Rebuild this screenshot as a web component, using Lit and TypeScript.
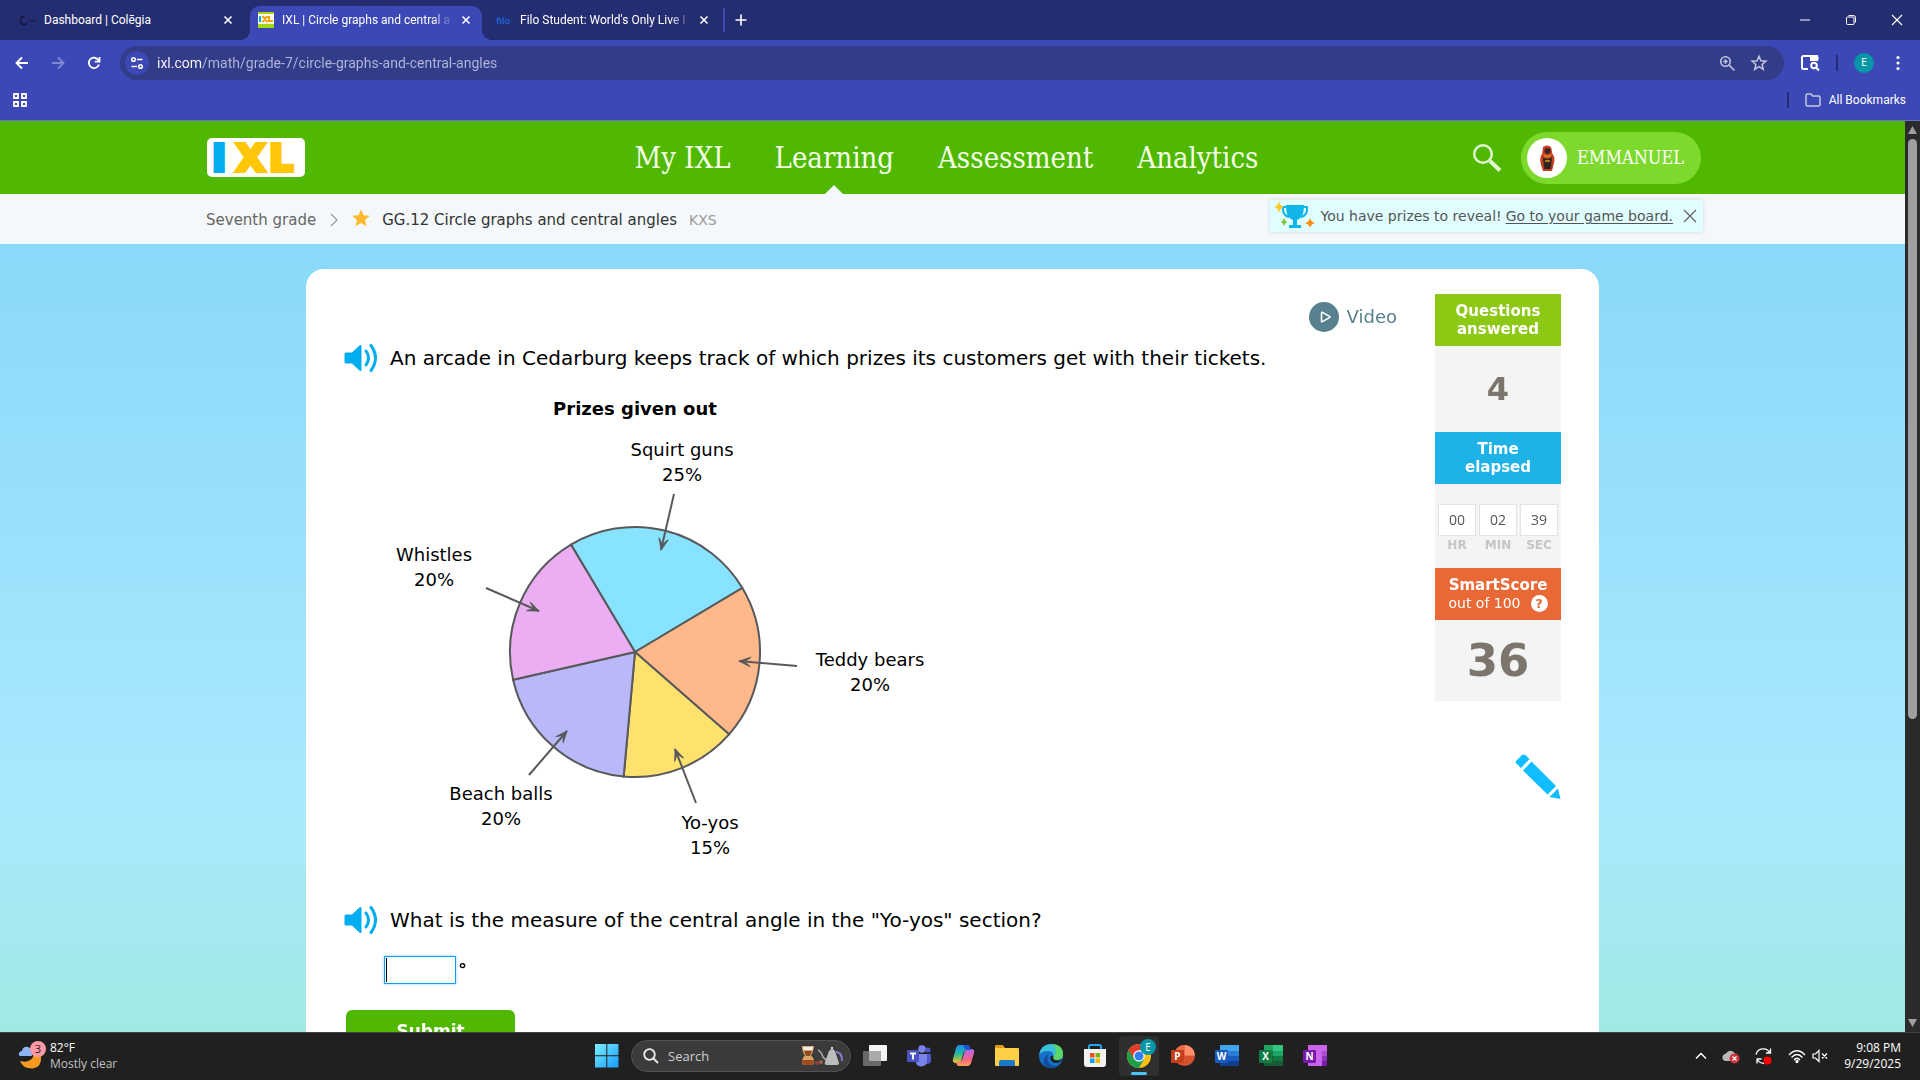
import { LitElement, html, svg, css, nothing } from "lit";
import { customElement } from "lit/decorators.js";
import { classMap } from "lit/directives/class-map.js";

/* ---------- shared icons ---------- */

const closeIcon = html`<svg width="10" height="10" viewBox="0 0 10 10" aria-hidden="true">
  <path d="M1.5 1.5l7 7M8.5 1.5l-7 7" stroke="#fff" stroke-width="1.6" fill="none" />
</svg>`;

const speakerIcon = html`<svg width="34" height="30" viewBox="0 0 34 30" aria-hidden="true">
  <path d="M2 9.500h6L15.500 2.500q2-1.400 2 1v23q0 2.400-2 1L8 20.500H2q-1.500 0-1.500-1.500v-8q0-1.500 1.500-1.500z" fill="#00aeef" />
  <path d="M22 8q5 7 0 14M27 2.500q9 12.500 0 25" fill="none" stroke="#00aeef" stroke-width="3" stroke-linecap="round" />
</svg>`;

const base = css`
  * {
    box-sizing: border-box;
  }
  button {
    border: 0;
    padding: 0;
    margin: 0;
    background: none;
    font: inherit;
    color: inherit;
    display: inline-flex;
    align-items: center;
    justify-content: center;
  }
  svg {
    display: block;
    flex: none;
  }
  a {
    color: inherit;
    text-decoration: none;
  }
  input {
    font: inherit;
    border: 0;
    outline: 0;
    padding: 0;
    background: none;
  }
`;

/* ---------- browser frame ---------- */

interface Tab {
  title: string;
  active: boolean;
  icon: unknown;
}

const tabs: Tab[] = [
  {
    title: "Dashboard | Colēgia",
    active: false,
    icon: html`<svg width="16" height="16" viewBox="0 0 16 16" aria-hidden="true">
      <path d="M5 4.500a4 4 0 1 0 2 6.500" fill="none" stroke="#121944" stroke-width="1.800" />
      <path d="M8 9h8" stroke="#1b2358" stroke-width="2" />
    </svg>`,
  },
  {
    title: "IXL | Circle graphs and central a",
    active: true,
    icon: html`<svg width="16" height="16" viewBox="0 0 16 16" aria-hidden="true">
      <rect width="16" height="16" fill="#fff" />
      <rect width="16" height="2" fill="#a4d80c" />
      <rect y="12" width="16" height="4" fill="#a4d80c" />
      <rect x="1" y="4" width="2" height="6" fill="#00aeef" />
      <path d="M4.500 4l5 6M9.500 4l-5 6M11 4v5h4" fill="none" stroke="#f7a500" stroke-width="2" />
    </svg>`,
  },
  {
    title: "Filo Student: World's Only Live I",
    active: false,
    icon: html`<span class="filo">filo</span>`,
  },
];

@customElement("browser-frame")
export class BrowserFrame extends LitElement {
  static styles = [
    base,
    css`
      :host {
        display: block;
        background: #3b48b5;
        color: #fff;
        font: 12px/16px Roboto, "Open Sans", sans-serif;
      }
      .strip {
        display: flex;
        align-items: stretch;
        height: 40px;
        padding-left: 12px;
        background: #252d72;
      }
      .tab {
        display: flex;
        align-items: center;
        gap: 8px;
        width: 238px;
        padding: 0 17px 0 8px;
        position: relative;
      }
      .tab.active {
        width: 232px;
        padding-right: 11px;
        margin-top: 6px;
        padding-bottom: 6px;
        border-radius: 10px 10px 0 0;
        background: #3b48b5;
      }
      .tab.active::before,
      .tab.active::after {
        content: "";
        position: absolute;
        bottom: 0;
        width: 10px;
        height: 10px;
      }
      .tab.active::before {
        left: -10px;
        background: radial-gradient(circle at 0 0, transparent 10px, #3b48b5 10px);
      }
      .tab.active::after {
        right: -10px;
        background: radial-gradient(circle at 100% 0, transparent 10px, #3b48b5 10px);
      }
      .tab.last {
        padding: 0 11px 0 14px;
      }
      .title {
        flex: 1;
        min-width: 0;
        overflow: hidden;
        white-space: nowrap;
      }
      .active .title,
      .last .title {
        mask-image: linear-gradient(to right, #000 88%, transparent);
      }
      .filo {
        width: 16px;
        color: #1c63d2;
        font: bold 10px/16px Lato, sans-serif;
      }
      .new {
        margin-left: 3px;
        padding-left: 10px;
        height: 24px;
        align-self: center;
        border-left: 2px solid #3b48b5;
      }
      .window {
        display: flex;
        gap: 30px;
        margin-left: auto;
        padding-right: 15px;
      }
      .window button {
        width: 16px;
      }
      .bar {
        display: flex;
        align-items: center;
        height: 46px;
        padding: 0 14px;
      }
      .nav {
        display: flex;
        gap: 20px;
        padding-right: 18px;
      }
      .url {
        display: flex;
        align-items: center;
        flex: 1;
        height: 34px;
        padding: 0 16px 0 5px;
        border-radius: 17px;
        background: #333c88;
      }
      .site {
        width: 24px;
        height: 24px;
        border-radius: 50%;
        background: #3b48b5;
      }
      .address {
        flex: 1;
        margin-left: 8px;
        font-size: 14px;
        line-height: 20px;
        color: transparent;
        -webkit-text-fill-color: transparent;
        background: linear-gradient(to right, #fff 45px, #b3b8dc 45px);
        -webkit-background-clip: text;
        background-clip: text;
      }
      .url > button + button {
        margin-left: 14px;
      }
      .side {
        display: flex;
        align-items: center;
        gap: 16px;
        padding-left: 16px;
      }
      .rule {
        width: 2px;
        height: 16px;
        background: #252d72;
      }
      .avatar {
        width: 20px;
        height: 20px;
        border-radius: 50%;
        background: #0796a6;
        font-size: 10px;
      }
      .marks {
        display: flex;
        align-items: center;
        justify-content: space-between;
        height: 35px;
        padding: 0 14px 6px 12px;
        border-bottom: 1px solid #6a70c4;
      }
      .all {
        display: flex;
        align-items: center;
        gap: 8px;
      }
      .all .rule {
        margin-right: 8px;
      }
    `,
  ];

  render() {
    return html`
      <div class="strip">
        ${tabs.map(
          (tab, i) => html`<div class=${classMap({ tab: true, active: tab.active, last: i === 2 })}>
            ${tab.icon}<span class="title">${tab.title}</span>
            <button aria-label="Close tab">${closeIcon}</button>
          </div>`,
        )}
        <button class="new" aria-label="New tab">
          <svg width="12" height="12" viewBox="0 0 12 12"><path d="M6 0.500v11M0.500 6h11" stroke="#fff" stroke-width="1.600" /></svg>
        </button>
        <div class="window">
          <button aria-label="Minimize">
            <svg width="12" height="12" viewBox="0 0 12 12"><path d="M1 6h10" stroke="#fff" /></svg>
          </button>
          <button aria-label="Restore">
            <svg width="12" height="12" viewBox="0 0 12 12" fill="none" stroke="#fff">
              <rect x="1.500" y="3" width="7.500" height="7.500" rx="1" /><path d="M3.500 1.500h5q2 0 2 2v5" />
            </svg>
          </button>
          <button aria-label="Close">
            <svg width="12" height="12" viewBox="0 0 12 12"><path d="M1 1l10 10M11 1L1 11" stroke="#fff" stroke-width="1.200" /></svg>
          </button>
        </div>
      </div>
      <div class="bar">
        <div class="nav">
          <button aria-label="Back">
            <svg width="16" height="16" viewBox="0 0 16 16" fill="none" stroke="#fff" stroke-width="1.800"><path d="M14 8H3M8 2.500L2.500 8 8 13.500" /></svg>
          </button>
          <button aria-label="Forward">
            <svg width="16" height="16" viewBox="0 0 16 16" fill="none" stroke="#8088d0" stroke-width="1.800"><path d="M2 8h11M8 2.500L13.500 8 8 13.500" /></svg>
          </button>
          <button aria-label="Reload">
            <svg width="16" height="16" viewBox="0 0 16 16" fill="none" stroke="#fff" stroke-width="1.800"><path d="M13 9.500A5.200 5.200 0 1 1 12.500 5.200L13.200 6.300M13.500 2v4.700H8.800" /></svg>
          </button>
        </div>
        <div class="url">
          <button class="site" aria-label="Site information">
            <svg width="14" height="14" viewBox="0 0 14 14" fill="none" stroke="#fff" stroke-width="1.500">
              <circle cx="3.500" cy="3.500" r="1.800" /><path d="M7 3.500h5.500M1.500 10.500H7" /><circle cx="10.500" cy="10.500" r="1.800" />
            </svg>
          </button>
          <input class="address" aria-label="Address" .value=${"ixl.com/math/grade-7/circle-graphs-and-central-angles"} />
          <button aria-label="Zoom">
            <svg width="17" height="17" viewBox="0 0 17 17" fill="none" stroke="#c3c6de" stroke-width="1.600">
              <circle cx="6.500" cy="6.500" r="4.700" /><path d="M10 10l5.500 5.500M4.300 6.500h4.400M6.500 4.300v4.400" />
            </svg>
          </button>
          <button aria-label="Bookmark this page">
            <svg width="18" height="18" viewBox="0 0 18 18" fill="none" stroke="#c3c6de" stroke-width="1.500">
              <path d="M9 2.200l1.900 4.600 5 .4-3.800 3.200 1.200 4.900L9 12.700l-4.300 2.600 1.200-4.900L2.100 7.200l5-.4z" />
            </svg>
          </button>
        </div>
        <div class="side">
          <button aria-label="Search with Lens">
            <svg width="20" height="18" viewBox="0 0 20 18" fill="none" stroke="#fff" stroke-width="2">
              <path d="M8 15H3.500Q2 15 2 13.500v-10Q2 2 3.500 2H16q1.500 0 1.500 1.500V6" /><path d="M11 2h6v4h-6z" fill="#fff" />
              <circle cx="14" cy="11.500" r="2.800" /><path d="M16 13.500l3 3" />
            </svg>
          </button>
          <span class="rule"></span>
          <button class="avatar" aria-label="Profile">E</button>
          <button aria-label="Menu">
            <svg width="16" height="16" viewBox="0 0 16 16" fill="#fff"><circle cx="8" cy="2.500" r="1.600" /><circle cx="8" cy="8" r="1.600" /><circle cx="8" cy="13.500" r="1.600" /></svg>
          </button>
        </div>
      </div>
      <div class="marks">
        <button aria-label="Apps">
          <svg width="16" height="16" viewBox="0 0 16 16" fill="none" stroke="#fff" stroke-width="1.800">
            <path d="M2 2h4v4H2zM10 2h4v4h-4zM2 10h4v4H2zM10 10h4v4h-4z" />
          </svg>
        </button>
        <div class="all">
          <span class="rule"></span>
          <svg width="16" height="14" viewBox="0 0 16 14" fill="none" stroke="#c3c6de" stroke-width="1.500">
            <path d="M1 2.500Q1 1 2.500 1H6l1.500 2h6q1.500 0 1.500 1.500v7q0 1.500-1.500 1.500h-11Q1 13 1 11.500z" />
          </svg>
          <button>All Bookmarks</button>
        </div>
      </div>
    `;
  }
}

/* ---------- site header ---------- */

@customElement("site-header")
export class SiteHeader extends LitElement {
  static styles = [
    base,
    css`
      :host {
        display: block;
        font: 15px/20px "DejaVu Sans", Verdana, sans-serif;
      }
      .green {
        display: flex;
        align-items: center;
        height: 73px;
        padding: 0 204px 0 207px;
        background: #50b800;
      }
      .logo {
        font: bold 38px/40px "DejaVu Sans", sans-serif;
      }
      .links {
        display: flex;
        flex: 1;
        align-self: stretch;
        justify-content: center;
        gap: 44px;
        font: 29px/74px "DejaVu Serif Condensed", "DejaVu Serif", serif;
        color: #f4ffe8;
        padding-left: 116px;
      }
      .link {
        position: relative;
        height: 73px;
      }
      .link.active::after {
        content: "";
        position: absolute;
        left: 50%;
        bottom: 0;
        margin-left: -9px;
        border: 9px solid transparent;
        border-top: 0;
        border-bottom-color: #f4f8fb;
      }
      .user {
        height: 52px;
        width: 180px;
        justify-content: flex-start;
        gap: 10px;
        margin-left: 19px;
        padding: 0 6px;
        border-radius: 26px;
        background: #7dda2d;
        color: #fff;
        font: 18px/20px "DejaVu Serif Condensed", "DejaVu Serif", serif;
      }
      .crumbs {
        display: flex;
        align-items: center;
        height: 50px;
        padding: 2px 202px 0 206px;
        background: #f4f8fb;
        color: #666;
      }
      .chevron {
        margin-left: 12px;
      }
      .star {
        margin: 0 0 4px 10px;
      }
      .skill {
        margin-left: 12px;
        color: #333;
      }
      .code {
        margin-left: 12px;
        color: #999;
        font-size: 14px;
      }
      .prizes {
        display: flex;
        align-items: center;
        height: 32px;
        margin: 0 0 8px auto;
        padding: 0 6px 0 4px;
        background: #e0fdff;
        box-shadow: 0 0 4px #cfd8dc;
        color: #555;
        font-size: 14px;
      }
      .prizes a {
        text-decoration: underline;
        text-underline-offset: 2px;
      }
      .prizes span {
        margin: 0 4px;
      }
      .prizes button {
        margin-left: 10px;
      }
    `,
  ];

  render() {
    return html`
      <header class="green">
        <a href="#" aria-label="Home">
          <svg class="logo" width="98" height="39" viewBox="0 0 98 39">
            <rect width="98" height="39" rx="5" fill="#fff" />
            <g stroke-width="4">
              <text x="5" y="33" fill="#00aeef" stroke="#00aeef">I</text>
              <text x="29" y="33" fill="#ffc708" stroke="#ffc708">X</text>
              <text x="62" y="33" fill="#ffc708" stroke="#ffc708">L</text>
            </g>
          </svg>
        </a>
        <nav class="links">
          ${["My IXL", "Learning", "Assessment", "Analytics"].map(
            (name) => html`<a href="#" class=${classMap({ link: true, active: name === "Learning" })}>${name}</a>`,
          )}
        </nav>
        <button aria-label="Search">
          <svg width="30" height="30" viewBox="0 0 30 30" fill="none" stroke="#e2f6cf">
            <circle cx="11" cy="11" r="8.800" stroke-width="2.500" /><path d="M18 18l10 9.500" stroke-width="4" />
          </svg>
        </button>
        <button class="user">
          <svg width="40" height="40" viewBox="0 0 40 40">
            <circle cx="20" cy="20" r="20" fill="#fff" />
            <path d="M16 9q4-3 8 0 1 3 1 6 4 5 1.500 12L25 33h-9l-2-6q-2-7 1.500-12 0-3 .5-6z" fill="#c73e22" />
            <circle cx="20.500" cy="13" r="3" fill="#3c2320" />
            <path d="M16 19q4 4 9 0l-1 12h-7z" fill="#30241f" />
            <path d="M17 17q3 3 7 0M18 23h5" stroke="#d69a1c" fill="none" stroke-width="1.300" />
          </svg>
          EMMANUEL
        </button>
      </header>
      <div class="crumbs">
        <a href="#">Seventh grade</a>
        <svg class="chevron" width="14" height="14" viewBox="0 0 14 14"><path d="M3 1l6 6-6 6" fill="none" stroke="#999" stroke-width="1.200" /></svg>
        <svg class="star" width="18" height="20" viewBox="0 0 18 20">
          <path d="M9 1.500l2.500 5.800 6.200.5-4.700 4.200 1.500 6.200L9 14.900l-5.500 3.300L5 12 .300 7.800l6.200-.5z" fill="#fdb92e" />
        </svg>
        <span class="skill">GG.12 Circle graphs and central angles</span>
        <span class="code">KXS</span>
        <div class="prizes">
          <svg width="42" height="30" viewBox="0 0 42 30">
            <path d="M12 4h18c0 9-2 13-7 15v5h4v3H15v-3h4v-5c-5-2-7-6-7-15z" fill="#12b5ea" />
            <path d="M12 6H9q-1 8 6 10M30 6h3q1 8-6 10" fill="none" stroke="#12b5ea" stroke-width="2" />
            <path d="M5 0q1 5 5 6-4 1-5 6Q4 7 0 6q4-1 5-6z" fill="#ffc92c" />
            <path d="M10 17q1 3 3 4-2 1-3 4-1-3-3-4 2-1 3-4z" fill="#7ac632" />
            <path d="M36 17q1 4 5 5-4 1-5 5-1-4-5-5 4-1 5-5z" fill="#fa8c16" />
          </svg>
          <span>You have prizes to reveal!</span>
          <a href="#">Go to your game board.</a>
          <button aria-label="Dismiss">
            <svg width="14" height="14" viewBox="0 0 14 14"><path d="M1 1l12 12M13 1L1 13" stroke="#666" stroke-width="1.400" /></svg>
          </button>
        </div>
      </div>
    `;
  }
}

/* ---------- circle graph ---------- */

interface Slice {
  name: string;
  percent: number;
  color: string;
  label: [number, number];
  from: [number, number];
  to: [number, number];
}

const slices: Slice[] = [
  { name: "Squirt guns", percent: 25, color: "#87e3ff", label: [338, 77], from: [330, 121], to: [317, 177] },
  { name: "Teddy bears", percent: 20, color: "#ffb88a", label: [526, 287], from: [453, 293], to: [395, 288] },
  { name: "Yo-yos", percent: 15, color: "#ffe26e", label: [366, 450], from: [352, 430], to: [331, 376] },
  { name: "Beach balls", percent: 20, color: "#b9b8f8", label: [157, 421], from: [185, 402], to: [223, 358] },
  { name: "Whistles", percent: 20, color: "#ecaef3", label: [90, 182], from: [142, 215], to: [195, 238] },
];

@customElement("circle-graph")
export class CircleGraph extends LitElement {
  static styles = [
    base,
    css`
      :host {
        display: block;
      }
      .text {
        font: 18px "DejaVu Sans", Verdana, sans-serif;
        text-anchor: middle;
      }
      .title {
        font-weight: bold;
      }
      .line {
        fill: none;
        stroke: #58595b;
        stroke-width: 2;
      }
      .head {
        fill: #58595b;
      }
    `,
  ];

  render() {
    const cx = 291;
    const cy = 279;
    const r = 125;
    let turn = -30.8;
    const at = (deg: number) => {
      const a = (deg * Math.PI) / 180;
      return `${cx + r * Math.sin(a)} ${cy - r * Math.cos(a)}`;
    };
    const wedges = slices.map((s) => {
      const start = turn;
      turn += s.percent * 3.6;
      return svg`<path class="line" style="fill:${s.color}" d="M${cx} ${cy}L${at(start)}A${r} ${r} 0 0 1 ${at(turn)}z" />`;
    });
    return html`<svg width="600" height="500" role="img" aria-label="Prizes given out">
      <text class="text title" x=${cx} y="42">Prizes given out</text>
      ${wedges}
      ${slices.map((s) => {
        const deg = (Math.atan2(s.to[1] - s.from[1], s.to[0] - s.from[0]) * 180) / Math.PI;
        return svg`
          <path class="line" d="M${s.from[0]} ${s.from[1]}L${s.to[0]} ${s.to[1]}" />
          <path class="head" transform="translate(${s.to[0]} ${s.to[1]}) rotate(${deg})" d="M1 0L-12 5.500L-11 3.500L-6 0L-11-3.500L-12-5.500z" />
          <text class="text" x=${s.label[0]} y=${s.label[1] + 6}>${s.name}</text>
          <text class="text" x=${s.label[0]} y=${s.label[1] + 31}>${s.percent}%</text>`;
      })}
    </svg>`;
  }
}

/* ---------- practice card ---------- */

@customElement("practice-card")
export class PracticeCard extends LitElement {
  static styles = [
    base,
    css`
      :host {
        display: grid;
        grid-template-columns: 1fr auto auto;
        align-items: start;
        gap: 38px;
        margin: 0 306px;
        padding: 25px 38px 60px;
        border-radius: 18px;
        background: #fff;
        color: #000;
        font: 18px/24px "DejaVu Sans", Verdana, sans-serif;
      }
      .work {
        padding-top: 49px;
        min-width: 0;
        margin-right: -60px;
      }
      .ask {
        display: flex;
        align-items: center;
        gap: 12px;
        height: 30px;
        font-size: 20px;
        white-space: nowrap;
      }
      .graph {
        margin: 0 0 32px;
      }
      .answer {
        display: flex;
        gap: 2px;
        margin: 21px 0 26px 40px;
        font-weight: bold;
        line-height: 28px;
      }
      .answer input {
        width: 72px;
        height: 28px;
        padding: 0 2px;
        border: 1px solid #0b9df0;
        box-shadow: 0 0 3px #8fd6f7;
        caret-color: transparent;
      }
      .answer input:focus {
        background: linear-gradient(#000, #000) 1px 1px / 1px 24px no-repeat;
      }
      .submit {
        width: 169px;
        height: 42px;
        margin-left: 2px;
        border-radius: 6px;
        background: #50b800;
        color: #fff;
        font-weight: bold;
        font-size: 17px;
      }
      .video {
        margin-top: 8px;
        gap: 8px;
        color: #58808f;
        line-height: 30px;
      }
      .stats {
        width: 126px;
        background: #f4f4f4;
        color: #7b756b;
        text-align: center;
        font-size: 15px;
        line-height: 18px;
      }
      .head {
        padding: 8px 0;
        color: #fff;
        font-weight: bold;
      }
      .green {
        background: #8dc814;
      }
      .blue {
        background: #1fb2e6;
      }
      .orange {
        background: #e86936;
      }
      .count {
        font: bold 32px/86px "DejaVu Sans", sans-serif;
      }
      .score {
        font: bold 45px/81px "DejaVu Sans", sans-serif;
      }
      .timer {
        display: grid;
        grid-template-columns: repeat(3, 38px);
        justify-content: center;
        gap: 1px 3px;
        padding: 20px 0 15px;
        color: #c3c7c1;
        font-weight: bold;
        font-size: 12px;
        line-height: 16px;
      }
      .box {
        border: 1px solid #e4e4e4;
        background: #fff;
        color: #555;
        font: 14px/30px "Open Sans", sans-serif;
      }
      .sub {
        display: flex;
        align-items: center;
        justify-content: center;
        gap: 10px;
        font-weight: normal;
        font-size: 14px;
      }
      .help {
        width: 17px;
        height: 17px;
        border-radius: 50%;
        background: #fff;
        color: #e86936;
        font: bold 13px/17px "DejaVu Sans", sans-serif;
      }
      .pencil {
        margin: 53px 0 0 auto;
        display: flex;
      }
    `,
  ];

  firstUpdated() {
    this.renderRoot.querySelector<HTMLInputElement>("#angle")?.focus();
  }

  private ask(text: string, target: string | null) {
    return html`<div class="ask">
      <button aria-label="Read aloud">${speakerIcon}</button>
      ${target ? html`<label for=${target}>${text}</label>` : html`<span>${text}</span>`}
    </div>`;
  }

  render() {
    const clock: [string, string][] = [
      ["00", "HR"],
      ["02", "MIN"],
      ["39", "SEC"],
    ];
    return html`
      <div class="work">
        ${this.ask("An arcade in Cedarburg keeps track of which prizes its customers get with their tickets.", null)}
        <circle-graph class="graph"></circle-graph>
        ${this.ask('What is the measure of the central angle in the "Yo-yos" section?', "angle")}
        <div class="answer"><input id="angle" type="text" inputmode="numeric" />°</div>
        <button class="submit">Submit</button>
      </div>
      <button class="video">
        <svg width="30" height="30" viewBox="0 0 30 30">
          <circle cx="15" cy="15" r="15" fill="#58808f" />
          <path d="M12.500 10.800q0-1 1-.5l7 4q1 .7 0 1.400l-7 4q-1 .5-1-.5z" fill="none" stroke="#fff" stroke-width="1.500" />
        </svg>
        Video
      </button>
      <aside>
        <div class="stats">
          <div class="head green">Questions<br />answered</div>
          <div class="count">4</div>
          <div class="head blue">Time<br />elapsed</div>
          <div class="timer">
            ${clock.map(([value]) => html`<span class="box">${value}</span>`)}
            ${clock.map(([, unit]) => html`<span>${unit}</span>`)}
          </div>
          <div class="head orange">
            SmartScore
            <div class="sub">out of 100 <button class="help" aria-label="About SmartScore">?</button></div>
          </div>
          <div class="score">36</div>
        </div>
        <button class="pencil" aria-label="Scratchpad">
          <svg width="46" height="46" viewBox="0 0 46 46" fill="#10bdff">
            <path d="M1.500 6.500l5-5q2-2 4.500 0l3.500 3.500-8.500 9L1.500 9.500q-2-1.500 0-3z" />
            <path d="M16.500 7.500L41 32l-8.500 8.500L8 16.500zM43 34.500L45.500 45 34.500 43z" />
          </svg>
        </button>
      </aside>
    `;
  }
}

/* ---------- taskbar ---------- */

const officeTile = (letter: string, tile: string, art: unknown) => svg`
  ${art}
  <rect y="6" width="13" height="13" rx="1" fill=${tile} />
  <text x="6.500" y="16" text-anchor="middle" font-family="Open Sans, sans-serif" font-weight="bold" font-size="10" fill="#fff">${letter}</text>`;

const books = (c: string[]) => svg`
  <rect x="5" y="1" width="19" height="6" fill=${c[0]} />
  <rect x="5" y="7" width="19" height="5" fill=${c[1]} />
  <rect x="5" y="12" width="19" height="5" fill=${c[2]} />
  <rect x="5" y="17" width="19" height="5" fill=${c[3]} />`;

const apps: { name: string; open?: boolean; art: unknown }[] = [
  {
    name: "Task View",
    art: svg`<rect x="6" y="1" width="18" height="16" rx="1" fill="#f4f4f4" />
      <rect y="7" width="18" height="15" rx="1" fill="#777" fill-opacity=".85" />
      <rect x="6" y="7" width="12" height="10" fill="#aaa" />`,
  },
  {
    name: "Microsoft Teams",
    art: svg`<circle cx="15" cy="5" r="3.800" fill="#7b83eb" /><circle cx="21" cy="6" r="2.600" fill="#5059c9" />
      <path d="M17 10h7v6q0 4-4 4h-3z" fill="#5059c9" /><path d="M9 10h11v7q0 5-6 5.500-5-.5-5.500-5.500z" fill="#7b83eb" />
      <rect y="6" width="12" height="12" rx="1" fill="#4b53bc" /><path d="M3 9.500h6M6 9.500v6" stroke="#fff" stroke-width="1.800" />`,
  },
  {
    name: "Copilot",
    art: svg`<defs>
        <linearGradient id="cpa" x1="0" y1="0" x2="0" y2="1"><stop offset="0" stop-color="#1c8bf0" /><stop offset=".5" stop-color="#25b89a" /><stop offset="1" stop-color="#f5c51c" /></linearGradient>
        <linearGradient id="cpb" x1="0" y1="0" x2="0" y2="1"><stop offset="0" stop-color="#b06af5" /><stop offset=".6" stop-color="#f4608c" /><stop offset="1" stop-color="#ffa455" /></linearGradient>
      </defs>
      <path d="M8 1h8q2 0 2.500 2l1 3h-4q-2 0-3 3l-2 7q-1 3-3 3H5q-4 0-3-4l3-11q1-3 3-3z" fill="url(#cpa)" />
      <path d="M16 22H8q-2 0-2.500-2l-1-2h4q2 0 3-3l2-7q1-3 3-3H20q4 0 3 4l-3 10q-1 3-4 3z" fill="url(#cpb)" />
      <path d="M11 1h5q2 0 2.500 2l1 3h-4q-2-.5-2.500-3-.5-2-2-2z" fill="#1757d6" />`,
  },
  {
    name: "File Explorer",
    art: svg`<path d="M0 2q0-1 1-1h7l2 3v6H0z" fill="#e09a10" /><rect y="4" width="24" height="18" rx="1" fill="#ffcf48" />
      <path d="M4 22v-4q0-2 2-2h12q2 0 2 2v4z" fill="#1a78c8" />`,
  },
  {
    name: "Microsoft Edge",
    art: svg`<circle cx="12" cy="12" r="12" fill="#1570c9" />
      <path d="M0 11Q2 0 12.500 0 24 1 24 10q0 6-7 6-4-1-2.500-4 0-5-6-5Q3 7 0 11z" fill="#39c2d6" />
      <path d="M14 0q10 1 10 10 0 6-7 6-4-1-2.500-4Q20 8 14 0z" fill="#5bd568" />
      <path d="M8.500 14q0 8 8 8 3 0 5-2-4 5-11 4-5-1-6-6 0-6 5-7z" fill="#124d9c" />
      <path d="M14.500 12q-1.500 3 2 4.200 4 .8 6.500-.9-1.500 4-6.500 3.700-6-1-5-6 1-2 3-1z" fill="#202020" />`,
  },
  {
    name: "Microsoft Store",
    art: svg`<path d="M6 5V2.500Q6 1 7.500 1h9Q18 1 18 2.500V5" fill="none" stroke="#22a4ee" stroke-width="2" />
      <path d="M1 5h22v15q0 3-3 3H4q-3 0-3-3z" fill="#f2f2f2" />
      <path d="M7 9h4.500v4.500H7z" fill="#f04e20" /><path d="M12.500 9H17v4.500h-4.500z" fill="#7cb800" />
      <path d="M7 14.500h4.500V19H7z" fill="#00a3ee" /><path d="M12.500 14.500H17V19h-4.500z" fill="#fdb800" />`,
  },
  {
    name: "Google Chrome",
    open: true,
    art: svg`<circle cx="12" cy="12" r="12" fill="#fbc116" />
      <path d="M12 12L1.600 6A12 12 0 0 0 12 24l5.200-9z" fill="#1e9f4b" />
      <path d="M1.600 6A12 12 0 0 1 22.400 6H12l-5 9z" fill="#e43e2b" />
      <circle cx="12" cy="12" r="5.800" fill="#fff" /><circle cx="12" cy="12" r="4.500" fill="#317ff0" />
      <circle cx="21" cy="3" r="8" fill="#0796a6" />
      <text x="21" y="7" text-anchor="middle" font-family="Open Sans, sans-serif" font-size="10" fill="#fff">E</text>`,
  },
  {
    name: "PowerPoint",
    art: officeTile("P", "#c43e1c", svg`<circle cx="13.500" cy="11.500" r="10.500" fill="#d4532e" /><path d="M13.500 1A10.500 10.500 0 0 1 24 11.500H13.500z" fill="#ff8f6b" /><path d="M13.500 1A10.500 10.500 0 0 0 3 11.500h10.500z" fill="#ed6c47" />`),
  },
  { name: "Word", art: officeTile("W", "#185abd", books(["#41a5ee", "#2b7cd3", "#185abd", "#103f91"])) },
  { name: "Excel", art: officeTile("X", "#107c41", svg`${books(["#21a366", "#107c41", "#185c37", "#185c37"])}<path d="M14 1h10v6H14z" fill="#33c481" /><path d="M14 7h10v5H14z" fill="#21a366" /><path d="M14 12h10v5H14z" fill="#107c41" />`) },
  { name: "OneNote", art: officeTile("N", "#7719aa", svg`<rect x="5" y="1" width="19" height="21" fill="#ca64ea" /><path d="M19 7h5v5h-5z" fill="#ae4bd5" /><path d="M19 12h5v5h-5z" fill="#9332bf" /><path d="M19 17h5v5h-5z" fill="#7719aa" />`) },
];

@customElement("task-bar")
export class TaskBar extends LitElement {
  static styles = [
    base,
    css`
      :host {
        display: grid;
        grid-template-columns: 1fr auto 1fr;
        align-items: center;
        box-sizing: border-box;
        height: 48px;
        padding: 0 0 1px 2px;
        border-top: 1px solid #454545;
        background: #202020;
        color: #fff;
        font: 12px/16px "Open Sans", "Noto Sans", sans-serif;
      }
      .weather {
        justify-self: start;
        gap: 4px;
        padding-left: 16px;
        text-align: left;
      }
      .dim {
        color: #c0c0c0;
      }
      .middle {
        display: flex;
        align-items: center;
        gap: 4px;
      }
      .app {
        width: 40px;
        height: 40px;
        border-radius: 4px;
        position: relative;
      }
      .app svg {
        overflow: visible;
      }
      .app.open {
        background: #2f2f2f;
      }
      .app.open::after {
        content: "";
        position: absolute;
        left: 12px;
        bottom: 1px;
        width: 16px;
        height: 3px;
        border-radius: 2px;
        background: #4cc2ff;
      }
      .search {
        display: flex;
        align-items: center;
        gap: 9px;
        width: 220px;
        height: 32px;
        padding: 0 6px 0 11px;
        border: 1px solid #515151;
        border-radius: 16px;
        background: #3b3b3b;
      }
      .search input {
        flex: 1;
        min-width: 0;
        color: #fff;
        font-size: 13px;
      }
      .search input::placeholder {
        color: #d0d0d0;
      }
      .tray {
        display: flex;
        align-items: center;
        justify-content: flex-end;
        padding-right: 19px;
      }
      .tray button {
        margin-right: 14px;
      }
      .tray .tight {
        margin-right: 6px;
      }
      .clock {
        margin-left: 2px;
        text-align: right;
      }
    `,
  ];

  render() {
    return html`
      <button class="weather">
        <svg width="28" height="30" viewBox="0 0 28 30">
          <path d="M2 20q7 2 10-1 4-2 3-6 4-2 8 2 1 11-8 12.500Q5 28 2 20z" fill="#f59a23" />
          <path d="M3 15q-3 0-2-3 1-2 3-2 1-5 6-4 4 1 4 9z" fill="#8eb5f5" />
          <circle cx="20" cy="8" r="8" fill="#ff99a4" />
          <text x="20" y="12" text-anchor="middle" font-size="11" fill="#1c1c1c">3</text>
        </svg>
        <span>82°F<br /><span class="dim">Mostly clear</span></span>
      </button>
      <div class="middle">
        <button class="app" aria-label="Start">
          <svg width="24" height="24" viewBox="0 0 24 24">
            <defs><linearGradient id="win" x1="0" y1="0" x2="1" y2="1"><stop offset="0" stop-color="#7defff" /><stop offset="1" stop-color="#159bff" /></linearGradient></defs>
            <path d="M0 0h11.300v11.300H0zM12.300 0H23.500v11.300H12.300zM0 12.300h11.300v11.200H0zM12.300 12.300H23.500v11.200H12.300z" fill="url(#win)" />
          </svg>
        </button>
        <div class="search">
          <svg width="16" height="16" viewBox="0 0 16 16" fill="none" stroke="#eee" stroke-width="1.800"><circle cx="6.500" cy="6.500" r="5.300" /><path d="M10.500 10.500l4.500 4.500" /></svg>
          <input type="search" placeholder="Search" aria-label="Search" />
          <svg width="43" height="20" viewBox="0 0 43 20">
            <path d="M1 0h12q-1 7-3 9.500Q14 13 13 17q-1 2-3 2H4q-3 0-3-3 0-4 3-6.500Q1 6 1 0z" fill="#dca468" />
            <path d="M2 1h10l-.500 3h-9z" fill="#eee" /><path d="M3 5h8l-2 5H5z" fill="#8d4b22" /><path d="M1 14h12q0 5-3 5H4q-3 0-3-5z" fill="#a04c1c" />
            <circle cx="16" cy="17" r="2" fill="#8b4532" /><circle cx="20" cy="16" r="2" fill="#a45b46" />
            <path d="M17 4q3 1 5 7l4 4" fill="none" stroke="#aaa" stroke-width="1.600" />
            <path d="M28 5q3-4 6 0l4 12q0 2-3 2h-9q-3 0-2-3z" fill="#bcbcbc" /><path d="M31 1v2" stroke="#ddd" stroke-width="2" /><path d="M35 6q6 0 6 9" fill="none" stroke="#8b79cc" stroke-width="2" />
          </svg>
        </div>
        ${apps.map(
          (app) => html`<button class=${classMap({ app: true, open: !!app.open })} aria-label=${app.name}>
            <svg width="24" height="24" viewBox="0 0 24 24">${app.art ?? nothing}</svg>
          </button>`,
        )}
      </div>
      <div class="tray">
        <button aria-label="Show hidden icons">
          <svg width="14" height="16" viewBox="0 0 14 16"><path d="M2 10.500l5-5 5 5" fill="none" stroke="#fff" stroke-width="1.500" /></svg>
        </button>
        <button aria-label="OneDrive">
          <svg width="18" height="16" viewBox="0 0 18 16">
            <path d="M3 13q-3-1-2.500-4.500Q1 6 4 5.500 6 2 9.500 3q3 .500 4 4v6z" fill="#b8b8b8" />
            <circle cx="12.500" cy="10.500" r="5" fill="#d13438" /><path d="M10.500 8.500l4 4M14.500 8.500l-4 4" stroke="#fff" stroke-width="1.200" />
          </svg>
        </button>
        <button aria-label="Update available">
          <svg width="20" height="20" viewBox="0 0 20 20">
            <path d="M2 8.500A7.500 7.500 0 0 1 16 7M16.500 2.500V7H12M3 17.500V13h4.500M3 13q2 4 7 4.500" fill="none" stroke="#fff" stroke-width="1.300" />
            <circle cx="13.500" cy="14.500" r="4" fill="#f00" />
          </svg>
        </button>
        <button class="tight" aria-label="Network">
          <svg width="18" height="16" viewBox="0 0 18 16" fill="none" stroke="#fff" stroke-width="1.300">
            <path d="M1 7q8-8.500 16 0M3.500 9.500q5.500-6 11 0M6 12q3-3.500 6 0" /><circle cx="9" cy="13.500" r="1" fill="#fff" />
          </svg>
        </button>
        <button aria-label="Volume muted">
          <svg width="16" height="14" viewBox="0 0 16 14" fill="none" stroke="#fff" stroke-width="1.200">
            <path d="M1 5h2.500L7 1.500v11L3.500 9H1zM10 4.500l5 5M15 4.500l-5 5" />
          </svg>
        </button>
        <div class="clock">9:08 PM<br />9/29/2025</div>
      </div>
    `;
  }
}

/* ---------- root ---------- */

@customElement("app-root")
export class AppRoot extends LitElement {
  static styles = [
    base,
    css`
      :host {
        display: flex;
        flex-direction: column;
        height: 100vh;
        overflow: hidden;
      }
      .view {
        display: flex;
        flex: 1;
        min-height: 0;
      }
      .page {
        display: flex;
        flex-direction: column;
        flex: 1;
        min-width: 0;
        overflow: hidden;
      }
      .sky {
        flex: 1;
        min-height: 0;
        padding-top: 25px;
        background: linear-gradient(#89d9f8, #a9e9ff 70%, #a0e9e3);
      }
      .scroll {
        display: flex;
        flex-direction: column;
        align-items: center;
        gap: 5px;
        width: 15px;
        padding: 5px 0;
        background: #2b2b2b;
      }
      .thumb {
        width: 9px;
        height: 580px;
        border-radius: 5px;
        background: #9f9f9f;
      }
      .down {
        margin-top: auto;
      }
    `,
  ];

  render() {
    return html`
      <browser-frame></browser-frame>
      <div class="view">
        <div class="page">
          <site-header></site-header>
          <main class="sky"><practice-card></practice-card></main>
        </div>
        <div class="scroll" aria-hidden="true">
          <svg width="9" height="8" viewBox="0 0 9 8"><path d="M4.500 0L9 8H0z" fill="#9f9f9f" /></svg>
          <div class="thumb"></div>
          <svg class="down" width="9" height="8" viewBox="0 0 9 8"><path d="M4.500 8L0 0h9z" fill="#9f9f9f" /></svg>
        </div>
      </div>
      <task-bar></task-bar>
    `;
  }
}
